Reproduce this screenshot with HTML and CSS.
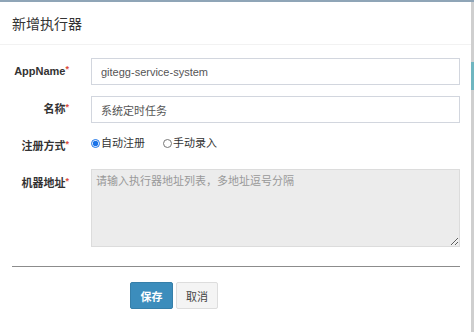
FILE: index.html
```html
<!DOCTYPE html>
<html lang="zh-CN">
<head>
    <meta charset="UTF-8">
    <meta name="viewport" content="width=device-width, initial-scale=1.0">
    <title>新增执行器</title>
    <link rel="stylesheet" href="styles.css">
</head>
<body>
    <div class="frame">
        <div class="modal">
            <div class="modal-header">
                <h4 class="modal-title">新增执行器</h4>
            </div>

            <form class="modal-body">
                <div class="form-row">
                    <label class="control-label">AppName<span class="req">*</span></label>
                    <input class="form-control" type="text" value="gitegg-service-system">
                </div>
                <div class="form-row">
                    <label class="control-label">名称<span class="req">*</span></label>
                    <input class="form-control" type="text" value="系统定时任务">
                </div>
                <div class="form-row radio-row">
                    <label class="control-label">注册方式<span class="req">*</span></label>
                    <div class="radio-group">
                        <label class="radio"><input type="radio" name="addressType" checked>自动注册</label>
                        <label class="radio"><input type="radio" name="addressType">手动录入</label>
                    </div>
                </div>
                <div class="form-row area-row">
                    <label class="control-label">机器地址<span class="req">*</span></label>
                    <textarea class="form-control area" readonly placeholder="请输入执行器地址列表，多地址逗号分隔"></textarea>
                </div>

                <hr class="divider">

                <div class="actions">
                    <button type="button" class="btn btn-primary">保存</button>
                    <button type="button" class="btn btn-default">取消</button>
                </div>
            </form>
        </div>
        <div class="edge"><span class="edge-mark"></span></div>
    </div>
</body>
</html>
```

FILE: styles.css
```css
* {
    box-sizing: border-box;
}

body {
    margin: 0;
    background: #fff;
    font-family: "Liberation Sans", "Noto Sans CJK SC", sans-serif;
    font-size: 11px;
    color: #333;
    overflow: hidden;
}

.frame {
    display: flex;
    height: 332px;
    border-top: 2px solid #8fa5b7;
}

.modal {
    flex: 1;
}

/* ===== header ===== */
.modal-header {
    height: 43px;
    display: flex;
    align-items: center;
    padding: 0 12px;
    border-bottom: 1px solid #f2f2f2;
}

.modal-title {
    margin: 0;
    font-size: 14px;
    font-weight: normal;
    color: #333;
}

/* ===== form ===== */
.modal-body {
    padding: 13px 11px 0 0;
}

.form-row {
    display: flex;
    align-items: flex-start;
    margin-bottom: 11px;
}

.control-label {
    width: 69px;
    flex-shrink: 0;
    text-align: right;
    font-weight: bold;
    line-height: 27px;
    color: #333;
}

.req {
    color: #dd4b39;
    font-size: 9px;
    vertical-align: top;
    position: relative;
    top: -2px;
}

.form-control {
    margin-left: 22px;
    flex: 1;
    height: 27px;
    border: 1px solid #d2d6de;
    padding: 0 9px;
    font: inherit;
    color: #555;
    background: #fff;
    outline: none;
}

.radio-row .control-label {
    line-height: 23px;
    padding-top: 1px;
}

.radio-group {
    margin-left: 22px;
    display: flex;
    gap: 18px;
    line-height: 17px;
    padding-top: 1px;
    color: #333;
}

.radio {
    display: flex;
    align-items: center;
}

.radio input {
    width: 9px;
    height: 9px;
    margin: 0 1px 0 0;
    accent-color: #1a73e8;
}

.area-row .control-label {
    line-height: 15px;
    padding-top: 7px;
}

.area {
    height: 78px;
    padding: 3px 4px;
    line-height: 17px;
    background: #ececec;
    border-color: #dcdcdc;
    resize: vertical;
}

.area::placeholder {
    color: #999;
}

.divider {
    margin: 19px 0 0 12px;
    border: 0;
    border-top: 1px solid #8c8c8c;
}

.actions {
    display: flex;
    gap: 3px;
    padding: 15px 0 0 130px;
}

.btn {
    height: 27px;
    padding: 0;
    white-space: nowrap;
    font: inherit;
    font-size: 11px;
    border-radius: 2px;
    border: 1px solid transparent;
}

.btn-primary {
    width: 43px;
    background: #3c8dbc;
    border-color: #367fa9;
    color: #fff;
    font-weight: bold;
}

.btn-default {
    width: 42px;
    background: #f4f4f4;
    border-color: #ddd;
    color: #444;
}

/* right scrollbar edge */
.edge {
    width: 3px;
    background: #cfcfcf;
}

.edge-mark {
    display: block;
    margin-top: 60px;
    height: 28px;
    background: #6fb6c0;
}
```
